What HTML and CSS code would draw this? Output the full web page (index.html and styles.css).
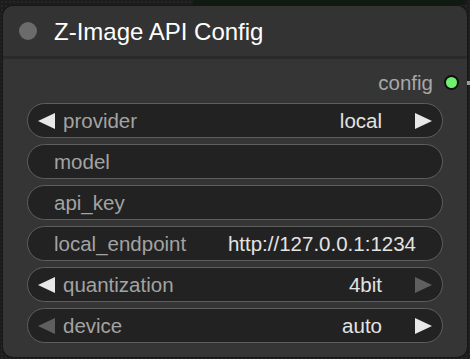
FILE: index.html
```html
<!DOCTYPE html>
<html lang="en">
<head>
    <meta charset="UTF-8">
    <meta name="viewport" content="width=device-width, initial-scale=1.0">
    <title>Z-Image API Config</title>
    <link rel="stylesheet" href="styles.css">
</head>
<body>
    <div class="canvas">
        <!-- bottom of the node above, peeking in -->
        <div class="node-above"></div>
        <!-- start of the link leaving the output slot -->
        <div class="link-stub"></div>

        <div class="node">
            <div class="node-title">
                <span class="collapse-dot"></span>
                <span class="title-text">Z-Image API Config</span>
            </div>

            <div class="node-body">
                <div class="output-row">
                    <span class="output-label">config</span>
                    <span class="output-slot"></span>
                </div>

                <div class="widget combo">
                    <span class="arrow left"></span>
                    <span class="w-label">provider</span>
                    <span class="w-value">local</span>
                    <span class="arrow right"></span>
                </div>
                <div class="widget text">
                    <span class="w-label">model</span>
                    <span class="w-value"></span>
                </div>
                <div class="widget text">
                    <span class="w-label">api_key</span>
                    <span class="w-value"></span>
                </div>
                <div class="widget text">
                    <span class="w-label">local_endpoint</span>
                    <span class="w-value">http://127.0.0.1:1234</span>
                </div>
                <div class="widget combo">
                    <span class="arrow left"></span>
                    <span class="w-label">quantization</span>
                    <span class="w-value">4bit</span>
                    <span class="arrow right dim"></span>
                </div>
                <div class="widget combo">
                    <span class="arrow left dim"></span>
                    <span class="w-label">device</span>
                    <span class="w-value">auto</span>
                    <span class="arrow right"></span>
                </div>
            </div>
        </div>
    </div>
</body>
</html>
```

FILE: styles.css
```css
* {
    margin: 0;
    padding: 0;
    box-sizing: border-box;
}

body {
    background-color: #1c1c1c;
    background-image: radial-gradient(#262626 1px, transparent 1px);
    background-size: 4px 4px;
    font-family: 'Liberation Sans', Arial, sans-serif;
    width: 470px;
    height: 359px;
    overflow: hidden;
}

.canvas {
    position: relative;
    padding: 6px 3px 0 3px;
    height: 359px;
}

.node-above {
    position: absolute;
    top: 0;
    left: 193px;
    right: 3px;
    height: 5px;
    background-color: #0f1a10;
    border-bottom-right-radius: 6px;
}

.link-stub {
    position: absolute;
    top: 81px;
    left: 467px;
    width: 3px;
    height: 4px;
    background-color: #9a9a9a;
}

.node {
    width: 464px;
    height: 351px;
    background-color: #353535;
    border-radius: 10px;
    box-shadow: 0 0 0 1px #161616;
    overflow: hidden;
}

.node-title {
    height: 53px;
    display: flex;
    align-items: center;
    background-color: #333333;
    border-bottom: 3px solid #2a2a2a;
    padding-left: 16px;
    gap: 17px;
}

.collapse-dot {
    width: 18px;
    height: 18px;
    border-radius: 50%;
    background-color: #6b6b6b;
    flex-shrink: 0;
}

.title-text {
    color: #ffffff;
    font-size: 24px;
    padding-top: 2px;
}

.node-body {
    display: flex;
    flex-direction: column;
    gap: 6px;
    padding: 0 24px 0 24px;
}

.output-row {
    height: 38px;
    display: flex;
    align-items: flex-end;
    justify-content: flex-end;
    margin-right: -16px;
    padding-bottom: 3px;
    gap: 11px;
}

.output-label {
    color: #a8a8a8;
    font-size: 20.5px;
    line-height: 23px;
}

.output-slot {
    width: 15px;
    height: 15px;
    margin-bottom: 4px;
    border-radius: 50%;
    background-color: #70f070;
    border: 2px solid #0e0e0e;
}

.widget {
    height: 35px;
    display: flex;
    align-items: center;
    background-color: #222222;
    border: 1.5px solid #5e5e5e;
    border-radius: 18px;
    font-size: 20.5px;
}

.w-label {
    color: #a3a3a3;
    flex: 1;
    white-space: nowrap;
}

.w-value {
    color: #e3e3e3;
    white-space: nowrap;
}

.widget.text {
    padding: 0 26px 0 26px;
}

.widget.combo {
    padding: 0 10px 0 10px;
}

.combo .w-label {
    margin-left: 8px;
}

.combo .w-value {
    margin-right: 33px;
}

.arrow {
    width: 0;
    height: 0;
    border-top: 8px solid transparent;
    border-bottom: 8px solid transparent;
    flex-shrink: 0;
}

.arrow.left {
    border-right: 17px solid #e8e8e8;
}

.arrow.right {
    border-left: 17px solid #e8e8e8;
}

.arrow.left.dim {
    border-right-color: #5f5f5f;
}

.arrow.right.dim {
    border-left-color: #5f5f5f;
}
```
